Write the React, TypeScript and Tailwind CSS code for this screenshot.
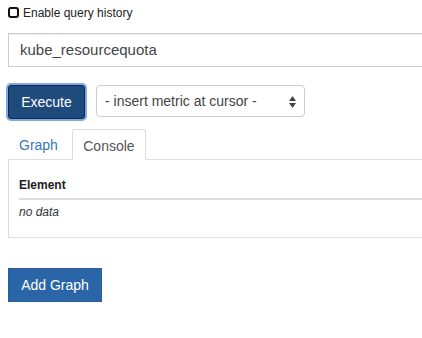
import React from "react";

export default function App() {
  return (
    <div className="w-[422px] h-[338px] overflow-hidden bg-white pl-2 font-['Liberation_Sans',Arial,sans-serif] text-[14px] text-[#333]">
      <div className="flex items-center h-[25px] gap-[4px]">
        <span className="block w-[11px] h-[11px] border-2 border-[#111] rounded-[3px] ml-[0px]" />
        <span className="text-[12px] leading-[14px] text-[#222]">Enable query history</span>
      </div>
      <div className="mt-[8px] w-[440px] h-[34px] border border-[#ccc] shadow-[inset_0_1px_1px_rgba(0,0,0,0.075)] flex items-center pl-[11px] text-[#444] text-[15px]">
        kube_resourcequota
      </div>
      <div className="mt-[18px] flex items-start gap-[11px]">
        <button className="h-[34px] w-[77px] bg-[#1f4a7c] border border-[#122b40] rounded-[3px] text-white text-[14px] leading-[20px] shadow-[0_0_0_2px_#7fa9ef]">
          Execute
        </button>
        <div className="relative w-[209px] h-[32px] border border-[#ccc] rounded-[4px] flex items-center pl-[8px] text-[#444] text-[14px] bg-white">
          - insert metric at cursor -
          <svg className="absolute right-[8px] top-[10px]" width="7" height="12" viewBox="0 0 7 12">
            <path d="M3.5 0 L7 5 L0 5 Z" fill="#444" />
            <path d="M0 7 L7 7 L3.5 12 Z" fill="#444" />
          </svg>
        </div>
      </div>
      <div className="mt-[10px] flex h-[31px] border-b border-[#ddd] w-[430px]">
        <div className="pl-[11px] pr-[12px] mr-[2px] pt-[6px] text-[#337ab7] leading-[20px]">Graph</div>
        <div className="w-[74px] text-center pt-[6px] leading-[20px] text-[#555] bg-white border border-[#ddd] border-b-white rounded-t-[3px] h-[31px]">
          Console
        </div>
      </div>
      <div className="w-[430px] h-[78px] border-x border-b border-[#ddd] px-[10px]">
        <div className="h-[40px] border-b-2 border-[#ddd] flex items-end pb-[6px] text-[12px] leading-[14px] font-bold text-[#222]">
          Element
        </div>
        <div className="pt-[5px] text-[12px] leading-[14px] italic text-[#333]">no data</div>
      </div>
      <button className="mt-[30px] h-[34px] w-[94px] bg-[#2a65a8] border border-[#2a5f98] text-white text-[14px] leading-[20px]">
        Add Graph
      </button>
    </div>
  );
}
